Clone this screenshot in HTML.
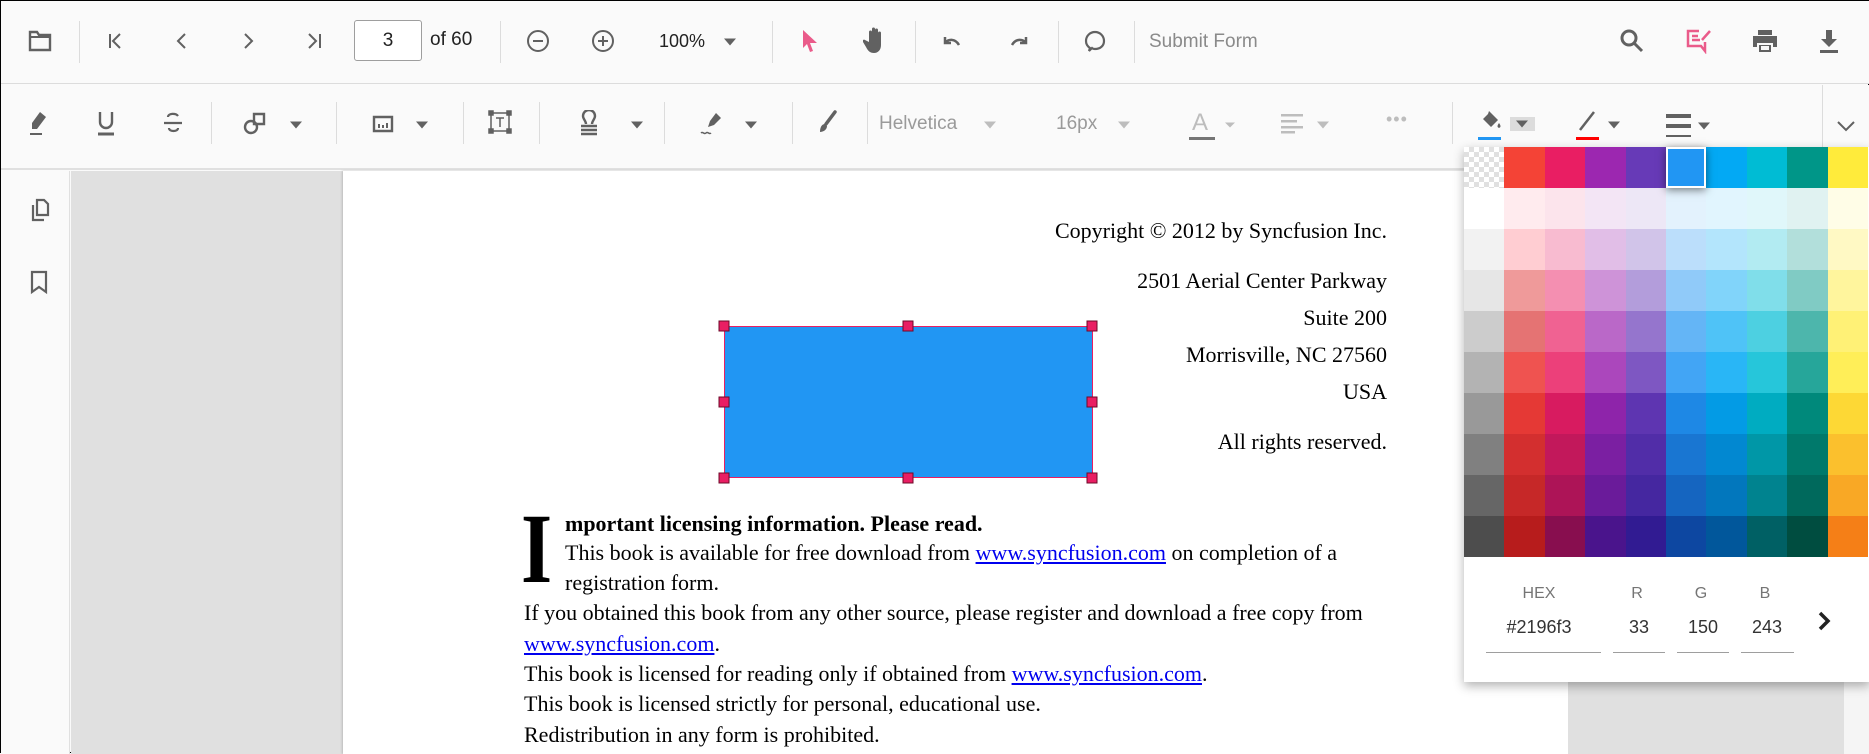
<!DOCTYPE html>
<html><head><meta charset="utf-8"><style>
*{margin:0;padding:0;box-sizing:border-box}
body{width:1869px;height:753px;overflow:hidden;position:relative;background:#fafafa;font-family:"Liberation Sans",sans-serif;border:1px solid #000}
.a{position:absolute}
.sep{position:absolute;width:1px;background:#dcdcdc}
.ic{position:absolute;transform:translate(-50%,-50%)}
.dd{position:absolute;width:0;height:0;border-left:6px solid transparent;border-right:6px solid transparent;border-top:7px solid #616161;transform:translate(-50%,-50%)}
.dd.l{border-top-color:#bdbdbd}
.doc{position:absolute;font-family:"Liberation Serif",serif;font-size:22px;color:#000;white-space:nowrap;line-height:24px}
.doc a{color:#0000ee;text-decoration:underline}
.r{text-align:right;right:481px}
.pal{position:absolute;left:1463px;top:146px;width:404px;display:grid;grid-template-columns:repeat(10,1fr);grid-auto-rows:41px}
.h{position:absolute;width:11px;height:11px;background:#e91e63;border:1px solid #6d0a2a;transform:translate(-50%,-50%)}
.lb{position:absolute;font-size:16px;color:#757575;transform:translateX(-50%)}
.vl{position:absolute;font-size:18px;color:#333;transform:translateX(-50%)}
.ul{position:absolute;height:1px;background:#9e9e9e;top:651px}
</style></head><body>
<!-- top toolbar -->
<div class="a" style="left:0;top:0;width:1869px;height:83px;background:#fafafa;border-bottom:1px solid #dcdcdc"></div>
<div class="a" style="left:0;top:84px;width:1869px;height:85px;background:#fafafa;border-bottom:2px solid #e0e0e0"></div>
<svg class="ic" style="left:39px;top:40px" width="24" height="22" viewBox="0 0 24 22"><path d="M2 2h7l2 3h11v15H2z" fill="none" stroke="#616161" stroke-width="2.4"/><path d="M2 7h20" stroke="#616161" stroke-width="2"/></svg>
<div class="sep" style="left:78px;top:20px;height:42px"></div>
<svg class="ic" style="left:115px;top:40px" width="20" height="20" viewBox="0 0 20 20" fill="none" stroke="#616161" stroke-width="2"><path d="M4 3v14M14 3l-7 7 7 7"/></svg>
<svg class="ic" style="left:181px;top:40px" width="20" height="20" viewBox="0 0 20 20" fill="none" stroke="#616161" stroke-width="2"><path d="M13 3l-7 7 7 7"/></svg>
<svg class="ic" style="left:247px;top:40px" width="20" height="20" viewBox="0 0 20 20" fill="none" stroke="#616161" stroke-width="2"><path d="M7 3l7 7-7 7"/></svg>
<svg class="ic" style="left:313px;top:40px" width="20" height="20" viewBox="0 0 20 20" fill="none" stroke="#616161" stroke-width="2"><path d="M16 3v14M5 3l7 7-7 7"/></svg>
<div class="a" style="left:353px;top:19px;width:68px;height:41px;border:1px solid #9e9e9e;border-radius:3px;background:#fff;font-size:19px;text-align:center;line-height:40px;color:#222">3</div>
<div class="a" style="left:429px;top:28px;font-size:19px;color:#222">of 60</div>
<div class="sep" style="left:499px;top:20px;height:42px"></div>
<svg class="ic" style="left:537px;top:40px" width="24" height="24" viewBox="0 0 24 24" fill="none" stroke="#616161" stroke-width="2"><circle cx="12" cy="12" r="10"/><path d="M7 12h10"/></svg>
<svg class="ic" style="left:602px;top:40px" width="24" height="24" viewBox="0 0 24 24" fill="none" stroke="#616161" stroke-width="2"><circle cx="12" cy="12" r="10"/><path d="M7 12h10M12 7v10"/></svg>
<div class="a" style="left:658px;top:30px;font-size:18px;color:#222">100%</div>
<div class="dd" style="left:729px;top:41px"></div>
<div class="sep" style="left:771px;top:20px;height:42px"></div>
<svg class="ic" style="left:809px;top:40px" width="20" height="26" viewBox="0 0 20 26"><path d="M3 2l14 13h-7l3 8-3 1-3-8-4 4z" fill="#ea5b8a"/></svg>
<svg class="ic" style="left:874px;top:39px" width="24" height="28" viewBox="0 0 24 28"><path d="M6 16V6a1.5 1.5 0 013 0v8V3a1.5 1.5 0 013 0v11V4a1.5 1.5 0 013 0v10V7a1.5 1.5 0 013 0v12c0 5-3 8-7 8s-6-2-8-6l-3-5c-1-2 1-3 2-2z" fill="#616161"/></svg>
<div class="sep" style="left:914px;top:20px;height:42px"></div>
<svg class="ic" style="left:951px;top:41px" width="22" height="16" viewBox="0 0 22 16" fill="none" stroke="#616161" stroke-width="2.5"><path d="M4 3v6h6M4 9c3-4 10-5 14 2"/></svg>
<svg class="ic" style="left:1018px;top:41px" width="22" height="16" viewBox="0 0 22 16" fill="none" stroke="#616161" stroke-width="2.5"><path d="M18 3v6h-6M18 9c-3-4-10-5-14 2"/></svg>
<div class="sep" style="left:1057px;top:20px;height:42px"></div>
<svg class="ic" style="left:1094px;top:40px" width="24" height="24" viewBox="0 0 24 24" fill="none" stroke="#616161" stroke-width="2.2"><path d="M7 19c-3-2-4-4-4-7 0-5 4-9 9-9s9 4 9 9-4 8-9 8c-1 0-2 0-3-1l-3 3z"/></svg>
<div class="sep" style="left:1133px;top:20px;height:42px"></div>
<div class="a" style="left:1148px;top:30px;font-size:19px;color:#8a8a8a">Submit Form</div>
<svg class="ic" style="left:1631px;top:40px" width="26" height="26" viewBox="0 0 26 26" fill="none" stroke="#616161" stroke-width="3"><circle cx="10" cy="10" r="7"/><path d="M15 15l8 8"/></svg>
<svg class="ic" style="left:1698px;top:40px" width="28" height="26" viewBox="0 0 28 26" fill="none" stroke="#ea5b8a" stroke-width="2.5"><path d="M14 3H3v15h13l4 5V14"/><path d="M7 8h6M7 12h8M17 12l8-9"/></svg>
<svg class="ic" style="left:1764px;top:40px" width="28" height="24" viewBox="0 0 28 24"><path d="M7 1h14v5H7z M2 7h24v11h-4v-4H6v4H2z M8 16h12v7H8z" fill="#616161"/><rect x="10" y="17" width="8" height="4" fill="#fafafa"/></svg>
<svg class="ic" style="left:1828px;top:40px" width="22" height="26" viewBox="0 0 22 26"><path d="M8 2h6v9h5l-8 8-8-8h5z M2 22h18v3H2z" fill="#616161"/></svg>
<!-- second toolbar -->
<svg class="ic" style="left:37px;top:122px" width="22" height="26" viewBox="0 0 22 26" fill="#616161"><path d="M13 2l6 5-9 12H5v-6z"/><path d="M3 23h12v2H3z"/></svg>
<svg class="ic" style="left:105px;top:122px" width="20" height="26" viewBox="0 0 20 26" fill="none" stroke="#616161" stroke-width="2.4"><path d="M4 2v10a6 6 0 0012 0V2"/><path d="M2 24h16" stroke-width="3"/></svg>
<svg class="ic" style="left:172px;top:122px" width="22" height="24" viewBox="0 0 22 24" fill="none" stroke="#616161" stroke-width="2.2"><path d="M16 5c-2-3-10-3-10 1M2 12h18M7 17c0 4 9 4 9 0"/></svg>
<div class="sep" style="left:210px;top:101px;height:42px"></div>
<svg class="ic" style="left:254px;top:122px" width="24" height="24" viewBox="0 0 24 24" fill="none" stroke="#616161" stroke-width="2.4"><circle cx="8" cy="16" r="6"/><path d="M11 3h10v10H11z"/></svg>
<div class="dd" style="left:295px;top:124px"></div>
<div class="sep" style="left:335px;top:101px;height:42px"></div>
<svg class="ic" style="left:382px;top:123px" width="22" height="18" viewBox="0 0 22 18" fill="none" stroke="#616161" stroke-width="2.4"><path d="M2 2h18v14H2z"/><path d="M7 13V9M11 13V10M15 13V8" stroke-width="2"/></svg>
<div class="dd" style="left:421px;top:124px"></div>
<div class="sep" style="left:462px;top:101px;height:42px"></div>
<svg class="ic" style="left:499px;top:121px" width="24" height="24" viewBox="0 0 24 24" fill="none" stroke="#616161" stroke-width="1.5"><path d="M3 3h18v18H3z"/><path d="M8 8h8M12 8v9"/><rect x="1" y="1" width="4" height="4" fill="#616161"/><rect x="19" y="1" width="4" height="4" fill="#616161"/><rect x="1" y="19" width="4" height="4" fill="#616161"/><rect x="19" y="19" width="4" height="4" fill="#616161"/></svg>
<div class="sep" style="left:538px;top:101px;height:42px"></div>
<svg class="ic" style="left:588px;top:122px" width="22" height="26" viewBox="0 0 22 26" fill="none" stroke="#616161" stroke-width="2.4"><path d="M8 14c0-3-3-5-3-8a6 6 0 0112 0c0 3-3 5-3 8"/><path d="M3 16h16M3 20h16M3 24h16" stroke-width="2.4"/></svg>
<div class="dd" style="left:636px;top:124px"></div>
<div class="sep" style="left:663px;top:101px;height:42px"></div>
<svg class="ic" style="left:710px;top:123px" width="26" height="26" viewBox="0 0 26 26" fill="#616161"><path d="M18 2l5 5-7 7-6 2 2-6z"/><path d="M3 22c2-2 3 2 5 0s3 2 5 0" fill="none" stroke="#616161" stroke-width="1.5"/></svg>
<div class="dd" style="left:750px;top:124px"></div>
<div class="sep" style="left:791px;top:101px;height:42px"></div>
<svg class="ic" style="left:826px;top:121px" width="22" height="24" viewBox="0 0 22 24"><path d="M19 2l-9 12" stroke="#616161" stroke-width="3.5" stroke-linecap="round"/><path d="M9 14c-3 0-5 3-5 8 3 0 7-2 7-6z" fill="#616161"/></svg>
<div class="sep" style="left:866px;top:101px;height:42px"></div>
<div class="a" style="left:878px;top:112px;font-size:19px;color:#9a9a9a">Helvetica</div>
<div class="dd l" style="left:989px;top:124px"></div>
<div class="a" style="left:1055px;top:112px;font-size:19px;color:#9a9a9a">16px</div>
<div class="dd l" style="left:1123px;top:124px"></div>
<div class="a" style="left:1191px;top:108px;font-size:24px;color:#bdbdbd">A</div>
<div class="a" style="left:1188px;top:136px;width:26px;height:3px;background:#757575"></div>
<div class="dd l" style="left:1229px;top:124px;border-width:5px 5px 6px"></div>
<svg class="ic" style="left:1291px;top:122px" width="24" height="22" viewBox="0 0 24 22" fill="#bdbdbd"><path d="M1 2h22v2.5H1zM1 8h16v2.5H1zM1 14h22v2.5H1zM1 19h14v2.5H1z"/></svg>
<div class="dd l" style="left:1322px;top:124px"></div>
<div class="a" style="left:1385px;top:108px;font-size:18px;color:#bdbdbd;letter-spacing:1px">•••</div>
<div class="sep" style="left:1451px;top:101px;height:42px"></div>
<svg class="ic" style="left:1491px;top:120px" width="24" height="22" viewBox="0 0 24 22" fill="#616161"><path d="M9 1l9 9-7 7-8-8 5-5z"/><path d="M19 13c-2 3-2 4 0 5 2-1 2-2 0-5z"/></svg>
<div class="a" style="left:1509px;top:116px;width:25px;height:14px;background:#dcdcdc"></div>
<div class="dd" style="left:1521px;top:123px"></div>
<div class="a" style="left:1477px;top:136px;width:23px;height:3px;background:#2196f3"></div>
<svg class="ic" style="left:1586px;top:120px" width="20" height="22" viewBox="0 0 20 22"><path d="M3 20L17 2" stroke="#616161" stroke-width="2.5"/></svg>
<div class="dd" style="left:1613px;top:124px"></div>
<div class="a" style="left:1575px;top:136px;width:23px;height:3px;background:#ff0000"></div>
<div class="a" style="left:1665px;top:113px;width:25px;height:4px;background:#616161"></div>
<div class="a" style="left:1665px;top:123px;width:25px;height:4px;background:#616161"></div>
<div class="a" style="left:1665px;top:134px;width:25px;height:2px;background:#616161"></div>
<div class="dd" style="left:1703px;top:125px"></div>
<div class="sep" style="left:1821px;top:84px;height:85px"></div>
<svg class="ic" style="left:1845px;top:125px" width="20" height="12" viewBox="0 0 20 12" fill="none" stroke="#616161" stroke-width="2"><path d="M2 2l8 8 8-8"/></svg>
<!-- side + content -->
<div class="a" style="left:0;top:170px;width:69px;height:583px;background:#fafafa;border-right:1px solid #e0e0e0"></div>
<svg class="ic" style="left:38px;top:209px" width="22" height="26" viewBox="0 0 22 26" fill="none" stroke="#616161" stroke-width="2.2"><path d="M9 3h7l4 4v11H9z"/><path d="M5 8v15h11"/></svg>
<svg class="ic" style="left:38px;top:281px" width="20" height="26" viewBox="0 0 20 26" fill="none" stroke="#616161" stroke-width="2.2"><path d="M3 3h14v20l-7-5-7 5z"/></svg>
<div class="a" style="left:70px;top:170px;width:272px;height:583px;background:#e0e0e0"></div>
<div class="a" style="left:342px;top:170px;width:1225px;height:583px;background:#fff;box-shadow:-1px 0 2px #bbb"></div>
<div class="a" style="left:1567px;top:170px;width:276px;height:583px;background:#e0e0e0"></div>
<div class="a" style="left:1843px;top:170px;width:26px;height:583px;background:#f5f5f5"></div>
<!-- doc text -->
<div class="doc r" style="top:218px">Copyright © 2012 by Syncfusion Inc.</div>
<div class="doc r" style="top:268px">2501 Aerial Center Parkway</div>
<div class="doc r" style="top:305px">Suite 200</div>
<div class="doc r" style="top:342px">Morrisville, NC 27560</div>
<div class="doc r" style="top:379px">USA</div>
<div class="doc r" style="top:429px">All rights reserved.</div>
<div class="a" style="left:723px;top:325px;width:369px;height:152px;background:#2196f3;border:1px solid #e91e63"></div>
<div class="h" style="left:723px;top:325px"></div><div class="h" style="left:907px;top:325px"></div><div class="h" style="left:1091px;top:325px"></div>
<div class="h" style="left:723px;top:401px"></div><div class="h" style="left:1091px;top:401px"></div>
<div class="h" style="left:723px;top:477px"></div><div class="h" style="left:907px;top:477px"></div><div class="h" style="left:1091px;top:477px"></div>
<div class="doc" style="left:520px;top:503px;font-size:100px;line-height:90px;font-weight:bold;transform:scaleX(0.8);transform-origin:left">I</div>
<div class="doc" style="left:564px;top:511px;font-weight:bold">mportant licensing information. Please read.</div>
<div class="doc" style="left:564px;top:540px">This book is available for free download from <a>www.syncfusion.com</a> on completion of a</div>
<div class="doc" style="left:564px;top:570px">registration form.</div>
<div class="doc" style="left:523px;top:600px">If you obtained this book from any other source, please register and download a free copy from</div>
<div class="doc" style="left:523px;top:631px"><a>www.syncfusion.com</a>.</div>
<div class="doc" style="left:523px;top:661px">This book is licensed for reading only if obtained from <a>www.syncfusion.com</a>.</div>
<div class="doc" style="left:523px;top:691px">This book is licensed strictly for personal, educational use.</div>
<div class="doc" style="left:523px;top:722px">Redistribution in any form is prohibited.</div>
<!-- palette -->
<div class="a" style="left:1463px;top:146px;width:406px;height:535px;background:#fff;box-shadow:0 4px 10px rgba(0,0,0,.3)"></div>
<div class="pal">
<div style="background:repeating-conic-gradient(#e0e0e0 0 25%,#fff 0 50%) 0 0/10px 10px"></div><div style="background:#f44336"></div><div style="background:#e91e63"></div><div style="background:#9c27b0"></div><div style="background:#673ab7"></div><div style="background:#2196f3;border:2px solid #fff;box-shadow:0 2px 8px rgba(0,0,0,.5);position:relative"></div><div style="background:#03a9f4"></div><div style="background:#00bcd4"></div><div style="background:#009688"></div><div style="background:#ffeb3b"></div>
<div style="background:#fff"></div><div style="background:#ffebee"></div><div style="background:#fce4ec"></div><div style="background:#f3e5f5"></div><div style="background:#ede7f6"></div><div style="background:#e3f2fd"></div><div style="background:#e1f5fe"></div><div style="background:#e0f7fa"></div><div style="background:#e0f2f1"></div><div style="background:#fffde7"></div>
<div style="background:#f2f2f2"></div><div style="background:#ffcdd2"></div><div style="background:#f8bbd0"></div><div style="background:#e1bee7"></div><div style="background:#d1c4e9"></div><div style="background:#bbdefb"></div><div style="background:#b3e5fc"></div><div style="background:#b2ebf2"></div><div style="background:#b2dfdb"></div><div style="background:#fff9c4"></div>
<div style="background:#e6e6e6"></div><div style="background:#ef9a9a"></div><div style="background:#f48fb1"></div><div style="background:#ce93d8"></div><div style="background:#b39ddb"></div><div style="background:#90caf9"></div><div style="background:#81d4fa"></div><div style="background:#80deea"></div><div style="background:#80cbc4"></div><div style="background:#fff59d"></div>
<div style="background:#cccccc"></div><div style="background:#e57373"></div><div style="background:#f06292"></div><div style="background:#ba68c8"></div><div style="background:#9575cd"></div><div style="background:#64b5f6"></div><div style="background:#4fc3f7"></div><div style="background:#4dd0e1"></div><div style="background:#4db6ac"></div><div style="background:#fff176"></div>
<div style="background:#b3b3b3"></div><div style="background:#ef5350"></div><div style="background:#ec407a"></div><div style="background:#ab47bc"></div><div style="background:#7e57c2"></div><div style="background:#42a5f5"></div><div style="background:#29b6f6"></div><div style="background:#26c6da"></div><div style="background:#26a69a"></div><div style="background:#ffee58"></div>
<div style="background:#999999"></div><div style="background:#e53935"></div><div style="background:#d81b60"></div><div style="background:#8e24aa"></div><div style="background:#5e35b1"></div><div style="background:#1e88e5"></div><div style="background:#039be5"></div><div style="background:#00acc1"></div><div style="background:#00897b"></div><div style="background:#fdd835"></div>
<div style="background:#808080"></div><div style="background:#d32f2f"></div><div style="background:#c2185b"></div><div style="background:#7b1fa2"></div><div style="background:#512da8"></div><div style="background:#1976d2"></div><div style="background:#0288d1"></div><div style="background:#0097a7"></div><div style="background:#00796b"></div><div style="background:#fbc02d"></div>
<div style="background:#666666"></div><div style="background:#c62828"></div><div style="background:#ad1457"></div><div style="background:#6a1b9a"></div><div style="background:#4527a0"></div><div style="background:#1565c0"></div><div style="background:#0277bd"></div><div style="background:#00838f"></div><div style="background:#00695c"></div><div style="background:#f9a825"></div>
<div style="background:#4d4d4d"></div><div style="background:#b71c1c"></div><div style="background:#880e4f"></div><div style="background:#4a148c"></div><div style="background:#311b92"></div><div style="background:#0d47a1"></div><div style="background:#01579b"></div><div style="background:#006064"></div><div style="background:#004d40"></div><div style="background:#f57f17"></div>
</div>
<div class="lb" style="left:1538px;top:584px">HEX</div>
<div class="lb" style="left:1636px;top:584px">R</div>
<div class="lb" style="left:1700px;top:584px">G</div>
<div class="lb" style="left:1764px;top:584px">B</div>
<div class="vl" style="left:1538px;top:616px">#2196f3</div>
<div class="vl" style="left:1638px;top:616px">33</div>
<div class="vl" style="left:1702px;top:616px">150</div>
<div class="vl" style="left:1766px;top:616px">243</div>
<div class="ul" style="left:1485px;width:115px"></div>
<div class="ul" style="left:1612px;width:52px"></div>
<div class="ul" style="left:1676px;width:52px"></div>
<div class="ul" style="left:1740px;width:53px"></div>
<svg class="ic" style="left:1823px;top:620px" width="14" height="22" viewBox="0 0 14 22" fill="none" stroke="#222" stroke-width="3.5"><path d="M3 3l8 8-8 8"/></svg>
</body></html>
